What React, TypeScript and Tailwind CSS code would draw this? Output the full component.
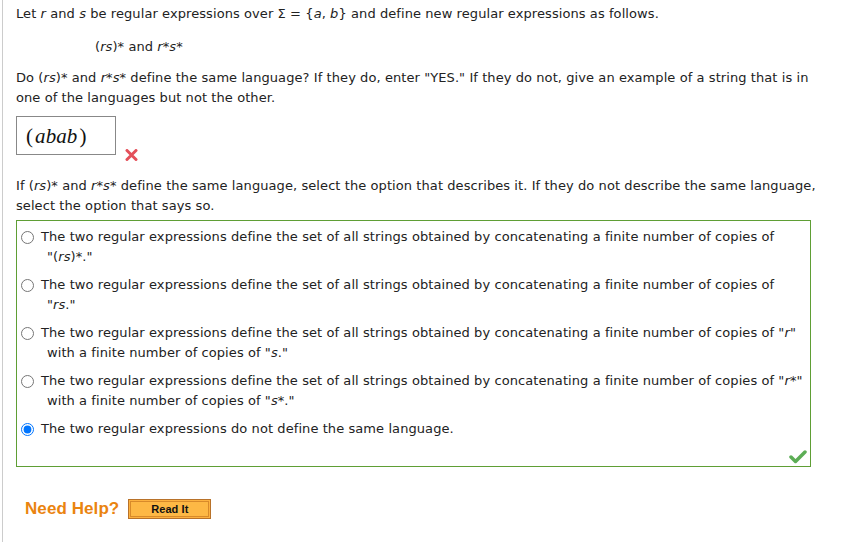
import React from 'react';

const V = { fontFamily: '"DejaVu Sans", Verdana, sans-serif' };

function Radio({ checked }: { checked?: boolean }) {
  return (
    <input
      type="radio"
      checked={!!checked}
      readOnly
      className="m-0 mt-[4px] w-[13px] h-[13px] shrink-0"
    />
  );
}

function Option({ checked, children }: { checked?: boolean; children: React.ReactNode }) {
  return (
    <div className="flex items-start">
      <Radio checked={checked} />
      <div className="pl-[13px] [text-indent:-6px] leading-[20px]">{children}</div>
    </div>
  );
}

export default function App() {
  return (
    <div className="min-h-screen bg-white">
      <div
        className="ml-[2px] min-h-[542px] border-l border-[#cccccc] pl-[13px] pt-[4px] text-[13px] leading-[20px] tracking-[0.08px] text-[#222]"
        style={V}
      >
        <p>
          Let <i>r</i> and <i>s</i> be regular expressions over Σ = {'{'}<i>a</i>, <i>b</i>{'}'} and define new regular expressions as follows.
        </p>
        <p className="mt-[13px] pl-[79px]">
          (<i>rs</i>)* and <i>r</i>*<i>s</i>*
        </p>
        <p className="mt-[11px]">
          Do (<i>rs</i>)* and <i>r</i>*<i>s</i>* define the same language? If they do, enter "YES." If they do not, give an example of a string that is in
          <br />
          one of the languages but not the other.
        </p>

        <div className="mt-[8px] flex items-end">
          <div className="w-[100px] h-[39px] border border-[#888] flex items-center pl-[9px] text-[21px] text-[#111]" style={{ fontFamily: '"Liberation Serif", serif' }}>
            <span>(</span>
            <i className="px-[2px]">abab</i>
            <span>)</span>
          </div>
          <svg width="13" height="12" viewBox="0 0 13 12" className="ml-[9px] -mb-[6px]">
            <path d="M2 1.5 L11 10.5 M11 1.5 L2 10.5" stroke="#e4505a" strokeWidth="3" strokeLinecap="round" />
          </svg>
        </div>

        <p className="mt-[21px]">
          If (<i>rs</i>)* and <i>r</i>*<i>s</i>* define the same language, select the option that describes it. If they do not describe the same language,
          <br />
          select the option that says so.
        </p>

        <div className="mt-[4px] w-[795px] border border-[#5f9e35] pl-[4px] pt-[6px] pb-[2px]">
          <div className="flex flex-col gap-[8px]">
            <Option>
              The two regular expressions define the set of all strings obtained by concatenating a finite number of copies of
              <br />
              "(<i>rs</i>)*."
            </Option>
            <Option>
              The two regular expressions define the set of all strings obtained by concatenating a finite number of copies of
              <br />
              "<i>rs</i>."
            </Option>
            <Option>
              The two regular expressions define the set of all strings obtained by concatenating a finite number of copies of "<i>r</i>"
              <br />
              with a finite number of copies of "<i>s</i>."
            </Option>
            <Option>
              The two regular expressions define the set of all strings obtained by concatenating a finite number of copies of "<i>r</i>*"
              <br />
              with a finite number of copies of "<i>s</i>*."
            </Option>
            <Option checked>The two regular expressions do not define the same language.</Option>
          </div>
          <div className="flex justify-end pr-[3px] mt-[10px]">
            <svg width="18" height="15" viewBox="0 0 18 15">
              <path d="M2 8 L6.5 12.5 L16 3" fill="none" stroke="#5cad55" strokeWidth="3.5" strokeLinecap="round" strokeLinejoin="round" />
            </svg>
          </div>
        </div>

        <div className="mt-[32px] flex items-center pl-[9px]" style={{ fontFamily: '"Liberation Sans", Arial, sans-serif' }}>
          <span className="text-[17px] font-bold text-[#ea840f]">Need Help?</span>
          <div className="ml-[9px] w-[83px] h-[20px] border border-[#b8722a] bg-[#fdb13f] p-[1px]">
            <div className="h-full border border-[#d88a2a] bg-[#fdb845] flex items-center justify-center text-[11px] font-bold text-[#111]">
              Read It
            </div>
          </div>
        </div>
      </div>
    </div>
  );
}
